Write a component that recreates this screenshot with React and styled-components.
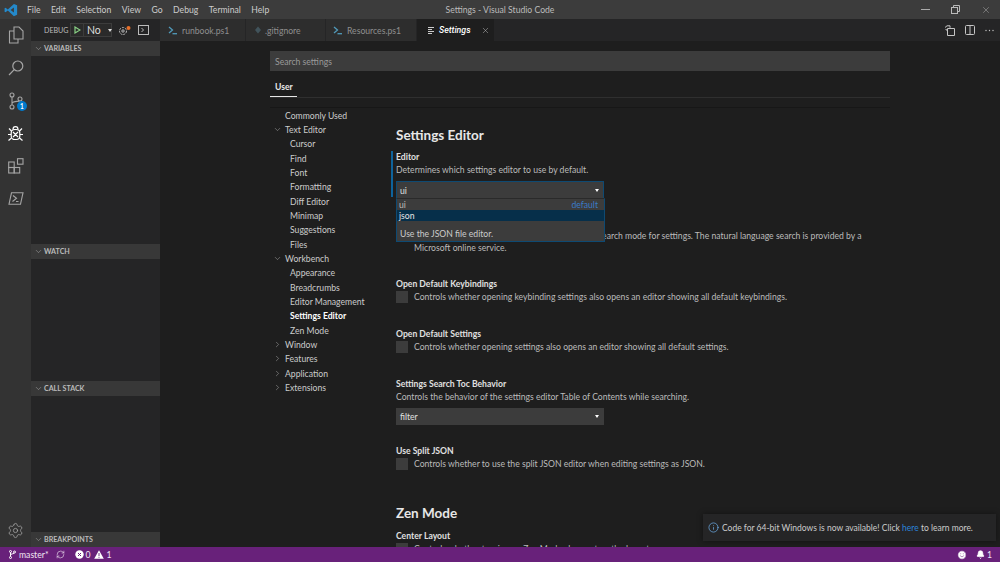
import React from "react";
import styled, { createGlobalStyle } from "styled-components";
import { X, ChevronDown, ChevronRight, Settings as Gear, Info, Bell, Smile, RefreshCw } from "lucide-react";

const Global = createGlobalStyle`
  html, body { margin: 0; padding: 0; width: 1000px; height: 562px; overflow: hidden; background: #1e1e1e; }
  body { font-family: "Lato", "Noto Sans", sans-serif; font-size: 8.65px; color: #ccc; }
  * { box-sizing: border-box; }
  svg { flex: none; }
`;

const Shell = styled.div`
  width: 1000px; height: 562px; display: flex; flex-direction: column; overflow: hidden; position: relative;
`;
const TitleBar = styled.div`
  height: 19px; flex: none; background: #3c3c3c; display: flex; align-items: center; position: relative; color: #ccc;
`;
const Logo = styled.svg`
  width: 14px; height: 14px; margin: 0 9px 0 4px; flex: none;
`;
const MenuItem = styled.span`
  margin-right: ${p => p.$gap}px; color: #ccc;
`;
const WindowTitle = styled.div`
  position: absolute; left: 0; right: 0; text-align: center; color: #bbb; pointer-events: none;
`;
const WindowButtons = styled.div`
  margin-left: auto; display: flex; align-items: center; gap: 21px; padding-right: 9px; color: #bbb;
`;
const Body = styled.div`
  flex: 1; min-height: 0; display: flex;
`;
const ActivityBar = styled.div`
  width: 31px; flex: none; background: #333; display: flex; flex-direction: column; align-items: center; position: relative;
`;
const ActivityIcon = styled.div`
  width: 31px; height: 32.7px; flex: none; display: flex; align-items: center; justify-content: center; position: relative;
`;
const Badge = styled.span`
  position: absolute; right: 4px; bottom: 6px; width: 10px; height: 10px; border-radius: 50%; background: #007acc; color: #fff; font-size: 6.5px; font-weight: 700; display: flex; align-items: center; justify-content: center;
`;
const GearSlot = styled.div`
  margin-top: auto; height: 25px; display: flex; align-items: flex-start; justify-content: center; color: #a5a5a5;
`;
const SideBar = styled.div`
  width: 129px; flex: none; background: #252526; display: flex; flex-direction: column;
`;
const DebugBar = styled.div`
  height: 22px; flex: none; display: flex; align-items: center; padding-left: 13px; font-size: 7.1px; color: #bbb;
`;
const DebugSelect = styled.div`
  height: 14px; width: 42px; margin-left: auto; flex: none; border: 1px solid #3c3c3c; display: flex; align-items: center; font-size: 10.5px; color: #ddd; background: #2a2a2a;
`;
const DebugLabel = styled.span`
  width: 25px; flex: none;
`;
const PlayCell = styled.div`
  width: 13px; height: 12px; flex: none; border-right: 1px solid #3c3c3c; display: flex; align-items: center; justify-content: center; margin-right: 3px;
`;
const Caret = styled.span`
  width: 0; height: 0; border-left: 2.5px solid transparent; border-right: 2.5px solid transparent; border-top: 3.5px solid ${p => p.$c || "#ddd"}; display: block;
`;
const DebugCaret = styled.span`
  margin-left: 7px; display: flex;
`;
const DebugTools = styled.div`
  display: flex; align-items: center; gap: 6px; margin: 0 11px 0 6px; color: #bbb;
`;
const Panel = styled.div`
  height: ${p => p.$h}px; flex: ${p => p.$grow ? 1 : "none"};
`;
const PanelHeader = styled.div`
  height: 15px; background: #383838; display: flex; align-items: center; font-size: 7.1px; font-weight: 700; color: #bbb; padding-left: 3px; gap: 1px;
`;
const Editor = styled.div`
  flex: 1; min-width: 0; display: flex; flex-direction: column; background: #1e1e1e;
`;
const TabStrip = styled.div`
  height: 22px; flex: none; background: #252526; display: flex; align-items: stretch;
`;
const Tab = styled.div`
  width: ${p => p.$w}px; flex: none; display: flex; align-items: center; padding-left: ${p => p.$pad}px; gap: 4px; background: ${p => p.$active ? "#1e1e1e" : "#2d2d2d"}; margin-right: 1px; color: ${p => p.$active ? "#fff" : "#8f8f8f"}; font-family: ${p => p.$active ? '"Roboto", sans-serif' : "inherit"}; font-size: ${p => p.$active ? "8.8px" : "inherit"}; font-style: ${p => p.$active ? "italic" : "normal"}; font-weight: ${p => p.$active ? 500 : 400};
`;
const TabClose = styled.span`
  margin-left: auto; margin-right: 4px; display: flex; color: #ccc;
`;
const TabActions = styled.div`
  margin-left: auto; display: flex; align-items: center; gap: 10px; padding-right: 6px; color: #c5c5c5;
`;
const Settings = styled.div`
  flex: 1; min-height: 0; overflow: hidden; padding: 10px 110px 0 110px; position: relative;
`;
const SearchBox = styled.div`
  height: 20px; background: #3c3c3c; display: flex; align-items: center; padding-left: 5px; color: #9a9a9a;
`;
const ScopeBar = styled.div`
  height: 27px; border-bottom: 1px solid #2f2f2f; display: flex; align-items: flex-end;
`;
const ScopeTab = styled.div`
  width: 27px; height: 17px; padding-left: 5px; font-weight: 700; color: #e7e7e7; border-bottom: 1px solid #e7e7e7; line-height: 14px;
`;
const HeaderGap = styled.div`
  height: 10px; border-bottom: 1px solid #171717;
`;
const Columns = styled.div`
  display: flex;
`;
const Toc = styled.div`
  width: 126px; flex: none;
`;
const TocRow = styled.div`
  height: 14.33px; display: flex; align-items: center; padding-left: ${p => p.$indent}px; color: ${p => p.$on ? "#fff" : "#ccc"}; font-weight: ${p => p.$on ? 700 : 400}; position: relative;
`;
const Twist = styled.span`
  position: absolute; left: 3px; display: flex; color: #bbb;
`;
const Content = styled.div`
  flex: 1; min-width: 0; padding-top: 18px; position: relative;
`;
const Heading = styled.div`
  font-size: 13.5px; line-height: 18px; font-weight: 700; color: #e7e7e7; margin-bottom: ${p => p.$mb}px;
`;
const Item = styled.div`
  margin-bottom: ${p => p.$mb}px; position: relative;
`;
const Modified = styled.span`
  position: absolute; left: -5px; top: 0; bottom: 2px; width: 2px; background: #0e639c;
`;
const ItemTitle = styled.div`
  font-weight: 700; color: #e0e0e0; line-height: 12px;
`;
const ItemDesc = styled.div`
  line-height: 12px; color: #bbb; margin-top: 1px;
`;
const CheckRow = styled.div`
  display: flex; gap: 6px; align-items: flex-start; margin-top: 1px; color: #bbb; line-height: 11.5px;
`;
const Check = styled.span`
  width: 12px; height: 12px; flex: none; background: #3c3c3c;
`;
const Select = styled.div`
  width: 208px; height: ${p => p.$h}px; margin-top: 5px; background: #3c3c3c; border: 1px solid ${p => p.$focus ? "#0e4a73" : "#3c3c3c"}; display: flex; align-items: center; justify-content: space-between; padding: 0 4px 0 3px; color: #e0e0e0;
`;
const Dropdown = styled.div`
  position: absolute; left: 0; top: 90px; width: 209px; height: 44px; background: #3c3c3c; border: 1px solid #0e4a73; border-top: 1px solid #2a2a2a; color: #ccc;
`;
const Option = styled.div`
  height: 11px; display: flex; align-items: center; justify-content: space-between; padding: 0 6px 0 2px; background: ${p => p.$sel ? "#062f4a" : "transparent"}; color: ${p => p.$sel ? "#e6e6e6" : "#bbb"};
`;
const DefaultTag = styled.span`
  color: #3a7bc8;
`;
const OptionHelp = styled.div`
  height: 20px; display: flex; align-items: center; padding: 5px 0 0 3px; color: #ccc;
`;
const Toast = styled.div`
  position: absolute; right: 4px; bottom: 6px; width: 293px; height: 27px; background: #252526; display: flex; align-items: center; padding-left: 5px; gap: 3px; color: #ccc; font-size: 8.5px; box-shadow: 0 0 6px rgba(0,0,0,.4);
`;
const ToastLink = styled.span`
  color: #2b83d9;
`;
const StatusBar = styled.div`
  height: 15px; flex: none; background: #68217a; color: #f0e6f2; display: flex; align-items: center; padding: 0 8px 0 9px; position: relative; z-index: 2;
`;
const StatusItem = styled.span`
  display: flex; align-items: center; gap: ${p => p.$gap ?? 3}px; margin-right: ${p => p.$mr ?? 0}px; margin-left: ${p => p.$auto ? "auto" : 0};
`;

const PsIcon = () => (
  <svg width="10" height="9" viewBox="0 0 10 9" fill="none" stroke="#519aba" strokeWidth="1.3"><path d="M1 1l3.500 3L1 7" /><path d="M4.500 7.700H9" /></svg>
);
const Chev = ({ open }) => open ? <ChevronDown size={9} strokeWidth={1.2} /> : <ChevronRight size={9} strokeWidth={1.2} />;

const tocA = ["Cursor", "Find", "Font", "Formatting", "Diff Editor", "Minimap", "Suggestions", "Files"];
const tocB = ["Appearance", "Breadcrumbs", "Editor Management"];
const menu = ["File", "Edit", "Selection", "View", "Go", "Debug", "Terminal", "Help"];

export default function App() {
  return (
    <Shell>
      <Global />
      <TitleBar>
        <Logo viewBox="0 0 24 24"><path fill="#2489ca" d="M17 1.500 22.500 4v16L17 22.500 6.500 12.700 2.700 15.800 1 14.800V9.200l1.700-1 3.800 3.100L17 1.500Zm0 6.200-5.800 4.300 5.800 4.400V7.700Z" /></Logo>
        {menu.map(m => <MenuItem key={m} $gap={10.5}>{m}</MenuItem>)}
        <WindowTitle>Settings - Visual Studio Code</WindowTitle>
        <WindowButtons>
          <svg width="9" height="9" viewBox="0 0 9 9"><path d="M0 4.500h9" stroke="#aaa" strokeWidth="1" /></svg>
          <svg width="9" height="9" viewBox="0 0 9 9" fill="none" stroke="#bbb"><rect x=".5" y="2.500" width="6" height="6" /><path d="M2.500 2.500v-2h6v6h-2" /></svg>
          <X size={10} strokeWidth={1.1} />
        </WindowButtons>
      </TitleBar>
      <Body>
        <ActivityBar>
          <ActivityIcon>
            <svg width="16" height="18" viewBox="0 0 16 18" fill="none" stroke="#a5a5a5" strokeWidth="1.1"><path d="M6 1h5l4 4v8H6z" /><path d="M6 5H1.500v12H10v-4" /></svg>
          </ActivityIcon>
          <ActivityIcon>
            <svg width="16" height="16" viewBox="0 0 16 16" fill="none" stroke="#a5a5a5" strokeWidth="1.2"><circle cx="9.800" cy="6" r="5" /><path d="M6.200 9.600 1 15" /></svg>
          </ActivityIcon>
          <ActivityIcon>
            <svg width="14" height="18" viewBox="0 0 14 18" fill="none" stroke="#a5a5a5" strokeWidth="1.1"><circle cx="3" cy="3" r="2" /><circle cx="3" cy="15" r="2" /><circle cx="11" cy="7" r="2" /><path d="M3 5v8M3 11.500c1-3 7-1.500 7.500-2.700" /></svg>
            <Badge>1</Badge>
          </ActivityIcon>
          <ActivityIcon>
            <svg width="17" height="17" viewBox="0 0 17 17" fill="none" stroke="#fff" strokeWidth="1.2"><rect x="4.200" y="4.500" width="8.600" height="10" rx="3.500" /><path d="M6 4.500c0-3.800 5-3.800 5 0M6 7l5 5M11 7l-5 5M4 9.500H1M16 9.500h-3M4.500 13l-3 2.500M12.500 13l3 2.500M4.500 6 2 3.500M12.500 6 15 3.500" /></svg>
          </ActivityIcon>
          <ActivityIcon>
            <svg width="16" height="16" viewBox="0 0 16 16" fill="none" stroke="#a5a5a5" strokeWidth="1.1"><rect x=".7" y="4" width="5.500" height="5.500" /><rect x=".7" y="9.500" width="5.500" height="5.500" /><rect x="6.200" y="9.500" width="5.500" height="5.500" /><rect x="9.500" y=".7" width="5.500" height="5.500" /></svg>
          </ActivityIcon>
          <ActivityIcon>
            <svg width="16" height="13" viewBox="0 0 16 13" fill="none" stroke="#a5a5a5" strokeWidth="1.1"><path d="M3.500.8H15L12.500 12.200H1z" /><path d="M5 3.500l3.500 2.700L4.500 9.500M8 9.500h2.500" /></svg>
          </ActivityIcon>
          <GearSlot><Gear size={17} strokeWidth={1.1} /></GearSlot>
        </ActivityBar>
        <SideBar>
          <DebugBar>
            <DebugLabel>DEBUG</DebugLabel>
            <DebugSelect>
              <PlayCell><svg width="7" height="8" viewBox="0 0 7 8" fill="none" stroke="#89d185" strokeWidth="1.2"><path d="M1 1l5 3-5 3z" /></svg></PlayCell>
              No<DebugCaret><Caret /></DebugCaret>
            </DebugSelect>
            <DebugTools>
              <svg width="14" height="11" viewBox="0 0 14 11" fill="none" stroke="#bbb"><circle cx="5" cy="6" r="3.500" strokeDasharray="2 1" /><circle cx="5" cy="6" r="1.200" /><circle cx="10.500" cy="3" r="2" fill="#e8702a" stroke="none" /></svg>
              <svg width="11" height="10" viewBox="0 0 11 10" fill="none" stroke="#bbb"><rect x=".5" y=".5" width="10" height="9" /><path d="M3.500 3l2 2-2 2" /></svg>
            </DebugTools>
          </DebugBar>
          <Panel $h={203}><PanelHeader><Chev open />VARIABLES</PanelHeader></Panel>
          <Panel $h={137}><PanelHeader><Chev open />WATCH</PanelHeader></Panel>
          <Panel $h={151}><PanelHeader><Chev open />CALL STACK</PanelHeader></Panel>
          <Panel $grow><PanelHeader><Chev open />BREAKPOINTS</PanelHeader></Panel>
        </SideBar>
        <Editor>
          <TabStrip>
            <Tab $w={85} $pad={8}><PsIcon />runbook.ps1</Tab>
            <Tab $w={79} $pad={9}><svg width="6" height="8" viewBox="0 0 6 8"><path d="M3 .5 6 4 3 7.500 0 4z" fill="#41535b" /></svg>.gitignore</Tab>
            <Tab $w={90} $pad={7}><PsIcon />Resources.ps1</Tab>
            <Tab $w={77} $active $pad={11}>
              <svg width="7" height="7" viewBox="0 0 7 7" stroke="#ccc"><path d="M0 .5h6M0 2.500h4M0 4.500h6M0 6.500h4" /></svg>
              Settings
              <TabClose><X size={9} strokeWidth={1.2} /></TabClose>
            </Tab>
            <TabActions>
              <svg width="11" height="11" viewBox="0 0 11 11" fill="none" stroke="#c5c5c5"><path d="M1 2.500 3 .8h3v2M2 4v1h1.500M3.500 3.500h7v7h-7z" /></svg>
              <svg width="10" height="10" viewBox="0 0 10 10" fill="none" stroke="#c5c5c5"><rect x=".5" y=".5" width="9" height="9" rx="1" /><path d="M5 .5v9" /></svg>
              <svg width="9" height="3" viewBox="0 0 9 3" fill="#c5c5c5"><circle cx="1" cy="1.500" r=".7" /><circle cx="4.500" cy="1.500" r=".7" /><circle cx="8" cy="1.500" r=".7" /></svg>
            </TabActions>
          </TabStrip>
          <Settings>
            <SearchBox>Search settings</SearchBox>
            <ScopeBar><ScopeTab>User</ScopeTab></ScopeBar>
            <HeaderGap />
            <Columns>
              <Toc>
                <TocRow $indent={15}>Commonly Used</TocRow>
                <TocRow $indent={15}><Twist><Chev open /></Twist>Text Editor</TocRow>
                {tocA.map(t => <TocRow key={t} $indent={20}>{t}</TocRow>)}
                <TocRow $indent={15}><Twist><Chev open /></Twist>Workbench</TocRow>
                {tocB.map(t => <TocRow key={t} $indent={20}>{t}</TocRow>)}
                <TocRow $indent={20} $on>Settings Editor</TocRow>
                <TocRow $indent={20}>Zen Mode</TocRow>
                <TocRow $indent={15}><Twist><Chev /></Twist>Window</TocRow>
                <TocRow $indent={15}><Twist><Chev /></Twist>Features</TocRow>
                <TocRow $indent={15}><Twist><Chev /></Twist>Application</TocRow>
                <TocRow $indent={15}><Twist><Chev /></Twist>Extensions</TocRow>
              </Toc>
              <Content>
                <Heading $mb={7}>Settings Editor</Heading>
                <Item $mb={18}>
                  <Modified />
                  <ItemTitle>Editor</ItemTitle>
                  <ItemDesc>Determines which settings editor to use by default.</ItemDesc>
                  <Select $h={18} $focus>ui<Caret $c="#fff" /></Select>
                </Item>
                <Item $mb={25}>
                  <ItemTitle>&nbsp;</ItemTitle>
                  <CheckRow><Check /><span>Controls whether to enable the natural language search mode for settings. The natural language search is provided by a Microsoft online service.</span></CheckRow>
                </Item>
                <Item $mb={25}>
                  <ItemTitle>Open Default Keybindings</ItemTitle>
                  <CheckRow><Check /><span>Controls whether opening keybinding settings also opens an editor showing all default keybindings.</span></CheckRow>
                </Item>
                <Item $mb={25}>
                  <ItemTitle>Open Default Settings</ItemTitle>
                  <CheckRow><Check /><span>Controls whether opening settings also opens an editor showing all default settings.</span></CheckRow>
                </Item>
                <Item $mb={20}>
                  <ItemTitle>Settings Search Toc Behavior</ItemTitle>
                  <ItemDesc>Controls the behavior of the settings editor Table of Contents while searching.</ItemDesc>
                  <Select $h={17}>filter<Caret $c="#fff" /></Select>
                </Item>
                <Item $mb={34}>
                  <ItemTitle>Use Split JSON</ItemTitle>
                  <CheckRow><Check /><span>Controls whether to use the split JSON editor when editing settings as JSON.</span></CheckRow>
                </Item>
                <Heading $mb={8}>Zen Mode</Heading>
                <Item $mb={0}>
                  <ItemTitle>Center Layout</ItemTitle>
                  <CheckRow><Check /><span>Controls whether turning on Zen Mode also centers the layout.</span></CheckRow>
                </Item>
                <Dropdown>
                  <Option>ui<DefaultTag>default</DefaultTag></Option>
                  <Option $sel>json</Option>
                  <OptionHelp>Use the JSON file editor.</OptionHelp>
                </Dropdown>
              </Content>
            </Columns>
            <Toast>
              <Info size={11} color="#75beff" strokeWidth={1.4} />
              <span>Code for 64-bit Windows is now available! Click <ToastLink>here</ToastLink> to learn more.</span>
            </Toast>
          </Settings>
        </Editor>
      </Body>
      <StatusBar>
        <StatusItem $mr={7} $gap={3}>
          <svg width="7" height="9" viewBox="0 0 7 9" fill="none" stroke="#fff"><circle cx="1.500" cy="1.500" r="1" /><circle cx="1.500" cy="7.500" r="1" /><circle cx="5.500" cy="2" r="1" /><path d="M1.500 2.500v4M1.500 5c0-1.500 4-1 4-2.200" /></svg>
          master*
        </StatusItem>
        <StatusItem $mr={10}><RefreshCw size={9} strokeWidth={1.6} /></StatusItem>
        <StatusItem $mr={3} $gap={2}>
          <svg width="9" height="9" viewBox="0 0 9 9"><circle cx="4.500" cy="4.500" r="4.200" fill="#fff" /><path d="M3 3l3 3M6 3 3 6" stroke="#68217a" strokeWidth="1" /></svg>0
        </StatusItem>
        <StatusItem>
          <svg width="10" height="9" viewBox="0 0 10 9"><path d="M5 .3 9.800 8.700H.2z" fill="#fff" /><path d="M5 3v3M5 6.800v1" stroke="#68217a" strokeWidth=".9" /></svg>1
        </StatusItem>
        <StatusItem $auto $mr={9}><Smile size={10} fill="#fff" stroke="#68217a" strokeWidth={1.4} /></StatusItem>
        <StatusItem $gap={2}><Bell size={9} fill="#fff" stroke="#fff" />1</StatusItem>
      </StatusBar>
    </Shell>
  );
}
